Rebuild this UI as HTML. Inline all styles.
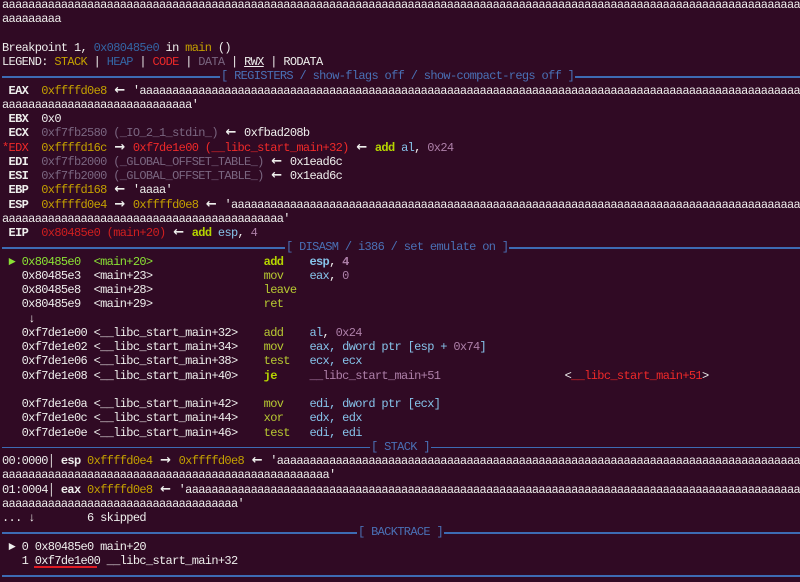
<!DOCTYPE html>
<html><head><meta charset="utf-8"><style>
html,body{margin:0;padding:0;background:#300a24;width:800px;height:576px;overflow:hidden}
#t{position:absolute;left:2px;top:-2px;width:798px;font-family:"Liberation Mono","DejaVu Sans Mono",monospace;font-size:12px;letter-spacing:-0.66px;color:#eeeeec}
.l{height:14.25px;line-height:14.25px;white-space:pre;overflow:hidden;position:relative}
.h::before{content:'';position:absolute;left:-2px;right:0;top:7px;height:1.5px;background:#3d6bb3}
.h span.x{position:relative;background:#300a24;color:#4a70b5;padding:0 1px}
.y{color:#c4a000}.g{color:#7a6680}.r{color:#ef2929}.rd{color:#d01f1f}.b{color:#3465a4}
.m{color:#b7c932}.mb{color:#b5d400;font-weight:bold}.o{color:#86c3ea}.p{color:#ad7fa8}.gr{color:#8ae234}
.w{font-weight:bold}
.ar{display:inline-block;width:13.08px;text-align:center;font-family:"DejaVu Sans",sans-serif;font-size:13px;font-weight:bold;letter-spacing:0;line-height:14px}
.u{text-decoration:underline}
#redline{position:absolute;left:34px;top:566px;width:63px;height:2px;background:#e01b24}
</style></head><body><div id="t">
<div class="l">aaaaaaaaaaaaaaaaaaaaaaaaaaaaaaaaaaaaaaaaaaaaaaaaaaaaaaaaaaaaaaaaaaaaaaaaaaaaaaaaaaaaaaaaaaaaaaaaaaaaaaaaaaaaaaaaaaaaaaaaaaaaaaaaaaaa</div>
<div class="l">aaaaaaaaa</div>
<div class="l"> </div>
<div class="l">Breakpoint 1, <span class="b">0x080485e0</span> in <span class="y">main</span> ()</div>
<div class="l">LEGEND: <span class="y">STACK</span> | <span class="b">HEAP</span> | <span class="r">CODE</span> | <span class="g">DATA</span> | <span class="u">RWX</span> | RODATA</div>
<div class="l h"><span class="x" style="margin-left:218px">[ REGISTERS / show-flags off / show-compact-regs off ]</span></div>
<div class="l"> <span class="w">EAX</span>  <span class="y">0xffffd0e8</span> <span class="ar">←</span> 'aaaaaaaaaaaaaaaaaaaaaaaaaaaaaaaaaaaaaaaaaaaaaaaaaaaaaaaaaaaaaaaaaaaaaaaaaaaaaaaaaaaaaaaaaaaaaaaaaaaaaaaaaaaaaa</div>
<div class="l">aaaaaaaaaaaaaaaaaaaaaaaaaaaaa'</div>
<div class="l"> <span class="w">EBX</span>  0x0</div>
<div class="l"> <span class="w">ECX</span>  <span class="g">0xf7fb2580 (_IO_2_1_stdin_)</span> <span class="ar">←</span> 0xfbad208b</div>
<div class="l"><span class="r">*EDX</span>  <span class="y">0xffffd16c</span> <span class="ar">→</span> <span class="r">0xf7de1e00 (__libc_start_main+32)</span> <span class="ar">←</span> <span class="mb">add</span> <span class="o">al</span>, <span class="p">0x24</span></div>
<div class="l"> <span class="w">EDI</span>  <span class="g">0xf7fb2000 (_GLOBAL_OFFSET_TABLE_)</span> <span class="ar">←</span> 0x1ead6c</div>
<div class="l"> <span class="w">ESI</span>  <span class="g">0xf7fb2000 (_GLOBAL_OFFSET_TABLE_)</span> <span class="ar">←</span> 0x1ead6c</div>
<div class="l"> <span class="w">EBP</span>  <span class="y">0xffffd168</span> <span class="ar">←</span> 'aaaa'</div>
<div class="l"> <span class="w">ESP</span>  <span class="y">0xffffd0e4</span> <span class="ar">→</span> <span class="y">0xffffd0e8</span> <span class="ar">←</span> 'aaaaaaaaaaaaaaaaaaaaaaaaaaaaaaaaaaaaaaaaaaaaaaaaaaaaaaaaaaaaaaaaaaaaaaaaaaaaaaaaaaaaaaaaaaaaaaaaaaaaaaa</div>
<div class="l">aaaaaaaaaaaaaaaaaaaaaaaaaaaaaaaaaaaaaaaaaaa'</div>
<div class="l"> <span class="w">EIP</span>  <span class="rd">0x80485e0 (main+20)</span> <span class="ar">←</span> <span class="mb">add</span> <span class="o">esp</span>, <span class="p">4</span></div>
<div class="l h"><span class="x" style="margin-left:283px">[ DISASM / i386 / set emulate on ]</span></div>
<div class="l"> <span class="gr">► 0x80485e0  &lt;main+20&gt;</span>                 <span class="mb">add</span>    <span class="o w">esp</span>, <span class="p w">4</span></div>
<div class="l">   0x80485e3  &lt;main+23&gt;                 <span class="m">mov</span>    <span class="o">eax</span>, <span class="p">0</span></div>
<div class="l">   0x80485e8  &lt;main+28&gt;                 <span class="m">leave</span></div>
<div class="l">   0x80485e9  &lt;main+29&gt;                 <span class="m">ret</span></div>
<div class="l">    ↓</div>
<div class="l">   0xf7de1e00 &lt;__libc_start_main+32&gt;    <span class="m">add</span>    <span class="o">al</span>, <span class="p">0x24</span></div>
<div class="l">   0xf7de1e02 &lt;__libc_start_main+34&gt;    <span class="m">mov</span>    <span class="o">eax, dword ptr [esp + </span><span class="p">0x74</span><span class="o">]</span></div>
<div class="l">   0xf7de1e06 &lt;__libc_start_main+38&gt;    <span class="m">test</span>   <span class="o">ecx, ecx</span></div>
<div class="l">   0xf7de1e08 &lt;__libc_start_main+40&gt;    <span class="mb">je</span>     <span class="p">__libc_start_main+51</span>                   &lt;<span class="r">__libc_start_main+51</span>&gt;</div>
<div class="l"> </div>
<div class="l">   0xf7de1e0a &lt;__libc_start_main+42&gt;    <span class="m">mov</span>    <span class="o">edi, dword ptr [ecx]</span></div>
<div class="l">   0xf7de1e0c &lt;__libc_start_main+44&gt;    <span class="m">xor</span>    <span class="o">edx, edx</span></div>
<div class="l">   0xf7de1e0e &lt;__libc_start_main+46&gt;    <span class="m">test</span>   <span class="o">edi, edi</span></div>
<div class="l h"><span class="x" style="margin-left:368px">[ STACK ]</span></div>
<div class="l">00:0000│ <span class="w">esp</span> <span class="y">0xffffd0e4</span> <span class="ar">→</span> <span class="y">0xffffd0e8</span> <span class="ar">←</span> 'aaaaaaaaaaaaaaaaaaaaaaaaaaaaaaaaaaaaaaaaaaaaaaaaaaaaaaaaaaaaaaaaaaaaaaaaaaaaaaaaaaaaaaaaaaaaaaaaaaaaaaaaaa</div>
<div class="l">aaaaaaaaaaaaaaaaaaaaaaaaaaaaaaaaaaaaaaaaaaaaaaaaaa'</div>
<div class="l">01:0004│ <span class="w">eax</span> <span class="y">0xffffd0e8</span> <span class="ar">←</span> 'aaaaaaaaaaaaaaaaaaaaaaaaaaaaaaaaaaaaaaaaaaaaaaaaaaaaaaaaaaaaaaaaaaaaaaaaaaaaaaaaaaaaaaaaaaaaaaaaaaaaaaaaaaaaaaaaaaaaa</div>
<div class="l">aaaaaaaaaaaaaaaaaaaaaaaaaaaaaaaaaaaa'</div>
<div class="l">... ↓        6 skipped</div>
<div class="l h"><span class="x" style="margin-left:355px">[ BACKTRACE ]</span></div>
<div class="l"> ► 0 0x80485e0 main+20</div>
<div class="l">   1 0xf7de1e00 __libc_start_main+32</div>
<div class="l h"></div>
</div><div id="redline"></div></body></html>
